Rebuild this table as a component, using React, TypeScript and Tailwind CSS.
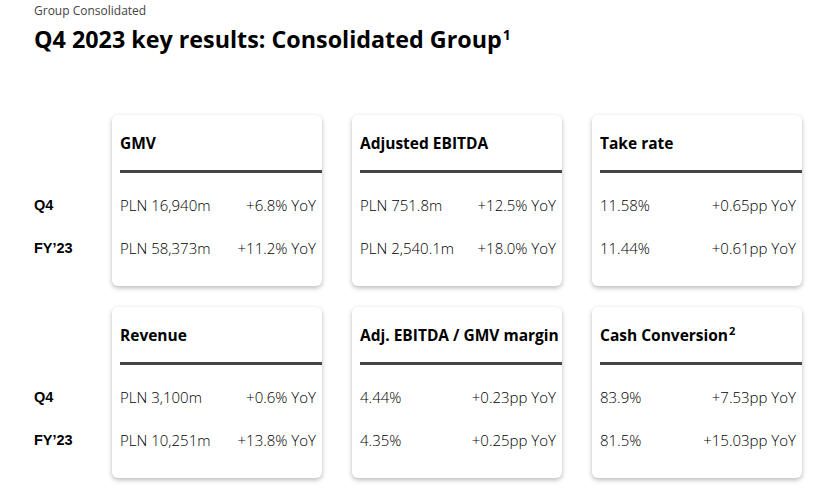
import React from "react";

type Card = { title: React.ReactNode; rows: [string, string][] };

const Sup = ({ n }: { n: string }) => (
  <span className="text-[11px] leading-none relative top-[-6px] ml-[1px]">{n}</span>
);

const top: Card[] = [
  { title: "GMV", rows: [["PLN 16,940m", "+6.8% YoY"], ["PLN 58,373m", "+11.2% YoY"]] },
  { title: "Adjusted EBITDA", rows: [["PLN 751.8m", "+12.5% YoY"], ["PLN 2,540.1m", "+18.0% YoY"]] },
  { title: "Take rate", rows: [["11.58%", "+0.65pp YoY"], ["11.44%", "+0.61pp YoY"]] },
];
const bottom: Card[] = [
  { title: "Revenue", rows: [["PLN 3,100m", "+0.6% YoY"], ["PLN 10,251m", "+13.8% YoY"]] },
  { title: "Adj. EBITDA / GMV margin", rows: [["4.44%", "+0.23pp YoY"], ["4.35%", "+0.25pp YoY"]] },
  { title: <>Cash Conversion<Sup n="2" /></>, rows: [["83.9%", "+7.53pp YoY"], ["81.5%", "+15.03pp YoY"]] },
];

function KpiCard({ c }: { c: Card }) {
  return (
    <div className="w-[210px] h-[171px] bg-white rounded-[6px] shadow-[0_2px_5px_rgba(0,0,0,0.28)] pl-2 pt-[18px] flex flex-col">
      <div className="text-[15.5px] leading-[20px] font-bold text-black whitespace-nowrap">{c.title}</div>
      <div className="h-[3px] bg-[#454545] mt-[17px]" />
      <div className="flex flex-col gap-[23px] mt-[22px] pr-[6px]">
        {c.rows.map(([a, b], i) => (
          <div key={i} className="flex justify-between text-[15px] leading-[20px] text-black font-light whitespace-nowrap">
            <span>{a}</span>
            <span>{b}</span>
          </div>
        ))}
      </div>
    </div>
  );
}

function Row({ cards }: { cards: Card[] }) {
  return (
    <div className="flex">
      <div className="w-[78px] pt-[80px] flex flex-col gap-[23px] font-['Liberation_Sans',sans-serif] font-bold text-[14.5px] leading-[20px] text-black">
        <div>Q4</div>
        <div>FY’23</div>
      </div>
      <div className="flex gap-[30px]">
        {cards.map((c, i) => (
          <KpiCard key={i} c={c} />
        ))}
      </div>
    </div>
  );
}

export default function App() {
  return (
    <div className="w-[827px] h-[495px] bg-white font-['Open_Sans',sans-serif] pl-[34px] pt-[2px] overflow-hidden">
      <div className="text-[12px] leading-[17px] text-[#444]">Group Consolidated</div>
      <div className="text-[23.3px] leading-[30px] font-bold text-black mt-[5px] whitespace-nowrap">
        Q4 2023 key results: Consolidated Group<span className="text-[14px] leading-none relative top-[-8px] ml-[1px]">1</span>
      </div>
      <div className="mt-[61px] flex flex-col gap-[21px]">
        <Row cards={top} />
        <Row cards={bottom} />
      </div>
    </div>
  );
}
